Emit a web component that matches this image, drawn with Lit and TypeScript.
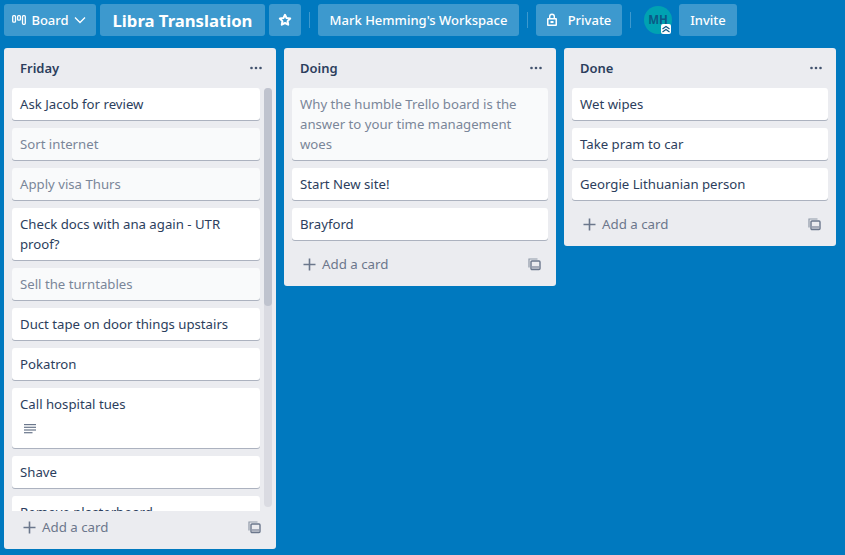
import { css, html, LitElement, svg } from 'lit';
import { customElement, property } from 'lit/decorators.js';

type Card = { text: string; faded?: boolean; desc?: boolean };

const plusIcon = svg`<path d="M6.5 0.500v12M0.500 6.500h12" fill="none" stroke="currentColor" stroke-width="1.6"/>`;
const templateIcon = svg`
  <path d="M9.500 1H1v8.500" fill="none" stroke="currentColor" stroke-width="1.2" opacity="0.7"/>
  <rect x="3" y="3" width="9" height="8.500" rx="1" fill="none" stroke="currentColor" stroke-width="1.400"/>
  <rect x="4" y="8" width="7" height="2.500" fill="currentColor" opacity="0.55"/>
`;

@customElement('board-list')
class BoardList extends LitElement {
  static styles = css`
    :host {
      display: block;
      width: 272px;
      flex: none;
    }

    .list {
      display: flex;
      flex-direction: column;
      background: #ebecf0;
      border-radius: 3px;
    }

    .list--tall {
      height: 501px;
    }

    .list__header {
      display: flex;
      justify-content: space-between;
      align-items: center;
      height: 40px;
      padding: 0 14px 0 16px;
      flex: none;
    }

    .list__name {
      font-size: 13px;
      line-height: 40px;
      font-weight: 600;
      color: #2c3e5d;
      margin-top: -1px;
    }

    .list__body {
      display: flex;
      flex: 1;
      min-height: 0;
      gap: 4px;
      padding: 0 8px;
    }

    .list--tall .list__body {
      padding-right: 4px;
    }

    .list__cards {
      flex: 1;
      min-width: 0;
      overflow: hidden;
    }

    .card {
      background: #fff;
      border-radius: 3px;
      box-shadow: 0 1px 0 rgba(9, 30, 66, 0.28);
      margin-bottom: 8px;
      padding: 6px 8px;
      font-size: 13.2px;
      line-height: 20px;
      color: #2c3e5d;
    }

    .card--faded {
      background: #f9fafb;
      color: #7a8699;
    }

    .card__badge {
      display: block;
      margin: 9px 0 7px 4px;
      color: #6b778c;
    }

    .scrollbar {
      flex: none;
      width: 8px;
      margin-bottom: 4px;
      border-radius: 4px;
      background: #dadbe2;
    }

    .scrollbar__thumb {
      height: 218px;
      border-radius: 4px;
      background: #bfc3ce;
    }

    .list__footer {
      display: flex;
      justify-content: space-between;
      align-items: center;
      height: 32px;
      flex: none;
      padding: 0 15px 6px 19px;
      font-size: 13.3px;
      color: #6b778c;
    }

    .add {
      display: flex;
      align-items: center;
      gap: 6px;
    }

    svg {
      display: block;
    }
  `;

  @property() name = '';
  @property({ type: Array }) cards: Card[] = [];
  @property({ type: Boolean }) tall = false;

  protected render() {
    return html`
      <div class="list ${this.tall ? 'list--tall' : ''}">
        <div class="list__header">
          <span class="list__name">${this.name}</span>
          <svg width="12" height="4" viewBox="0 0 12 4" fill="#42526e">
            <circle cx="1.500" cy="2" r="1.300" /><circle cx="6" cy="2" r="1.300" /><circle cx="10.500" cy="2" r="1.300" />
          </svg>
        </div>
        <div class="list__body">
          <div class="list__cards">
            ${this.cards.map(
              (c) => html`
                <div class="card ${c.faded ? 'card--faded' : ''}">
                  ${c.text}
                  ${c.desc
                    ? html`<svg class="card__badge" width="12" height="12" viewBox="0 0 12 12" fill="currentColor">
                        <rect y="1" width="12" height="1.200" /><rect y="3.700" width="12" height="1.200" />
                        <rect y="6.400" width="12" height="1.200" /><rect y="9.100" width="8.500" height="1.200" />
                      </svg>`
                    : ''}
                </div>
              `,
            )}
          </div>
          ${this.tall ? html`<div class="scrollbar"><div class="scrollbar__thumb"></div></div>` : ''}
        </div>
        <div class="list__footer">
          <span class="add">
            <svg width="13" height="13" viewBox="0 0 13 13">${plusIcon}</svg>
            Add a card
          </span>
          <svg width="13" height="13" viewBox="0 0 13 13">${templateIcon}</svg>
        </div>
      </div>
    `;
  }
}

const friday: Card[] = [
  { text: 'Ask Jacob for review' },
  { text: 'Sort internet', faded: true },
  { text: 'Apply visa Thurs', faded: true },
  { text: 'Check docs with ana again - UTR proof?' },
  { text: 'Sell the turntables', faded: true },
  { text: 'Duct tape on door things upstairs' },
  { text: 'Pokatron' },
  { text: 'Call hospital tues', desc: true },
  { text: 'Shave' },
  { text: 'Remove plasterboard' },
];

const doing: Card[] = [
  { text: 'Why the humble Trello board is the answer to your time management woes', faded: true },
  { text: 'Start New site!' },
  { text: 'Brayford' },
];

const done: Card[] = [
  { text: 'Wet wipes' },
  { text: 'Take pram to car' },
  { text: 'Georgie Lithuanian person' },
];

@customElement('app-root')
export class AppRoot extends LitElement {
  static styles = css`
    :host {
      display: block;
      height: 555px;
      overflow: hidden;
      background: #0079bf;
      font-family: 'Noto Sans', 'Liberation Sans', sans-serif;
    }

    .bar {
      display: flex;
      align-items: center;
      height: 32px;
      padding: 4px 0 12px 4px;
      color: #fff;
    }

    .btn {
      display: flex;
      align-items: center;
      justify-content: center;
      height: 32px;
      flex: none;
      box-sizing: border-box;
      border-radius: 3px;
      background: rgba(255, 255, 255, 0.24);
      font-size: 13px;
      font-weight: 500;
      margin-right: 4px;
    }

    .btn--board { width: 92px; gap: 5px; padding-right: 2px; }
    .btn--title { width: 165px; font-size: 16.7px; font-weight: 700; }
    .btn--star { width: 32px; }
    .btn--workspace { width: 201px; }
    .btn--private { width: 86px; gap: 10px; padding-right: 1px; }
    .btn--invite { width: 58px; }

    .sep {
      flex: none;
      width: 1px;
      height: 16px;
      margin: 0 8px 0 4px;
      background: rgba(255, 255, 255, 0.24);
    }

    .avatar {
      position: relative;
      flex: none;
      width: 28px;
      height: 28px;
      margin: 0 7px 0 5px;
      border-radius: 50%;
      background: #00a2b2;
      color: #0b5a86;
      font-size: 11.5px;
      font-weight: 700;
      line-height: 27px;
      text-align: center;
    }

    .avatar__badge {
      position: absolute;
      right: 1px;
      bottom: 0;
      width: 10px;
      height: 10px;
      border-radius: 2px;
      background: #fff;
    }

    .lists {
      display: flex;
      align-items: flex-start;
      gap: 8px;
      padding-left: 4px;
    }

    svg {
      display: block;
    }
  `;

  protected render() {
    return html`
      <div class="bar">
        <div class="btn btn--board">
          <svg width="14" height="10" viewBox="0 0 14 10" fill="none" stroke="#fff" stroke-width="1.300">
            <rect x="0.700" y="0.700" width="2.800" height="6.500" rx="1" /><rect x="5.600" y="0.700" width="2.800" height="4.500" rx="1" /><rect x="10.500" y="0.700" width="2.800" height="8.600" rx="1" />
          </svg>
          Board
          <svg width="12" height="8" viewBox="0 0 12 8" fill="none" stroke="#fff" stroke-width="1.300">
            <path d="M1 1.500l5 5 5-5" />
          </svg>
        </div>
        <div class="btn btn--title">Libra Translation</div>
        <div class="btn btn--star">
          <svg width="14" height="14" viewBox="0 0 14 14" fill="none" stroke="#fff" stroke-width="2">
            <path d="M7 1.800l1.600 3.300 3.600.5-2.600 2.500.6 3.600L7 10l-3.200 1.700.6-3.600-2.600-2.500 3.600-.5z" stroke-linejoin="round" />
          </svg>
        </div>
        <div class="sep"></div>
        <div class="btn btn--workspace">Mark Hemming's Workspace</div>
        <div class="sep"></div>
        <div class="btn btn--private">
          <svg width="12" height="14" viewBox="0 0 12 14" fill="#fff">
            <path fill-rule="evenodd" d="M3 5V3.500a3 3 0 0 1 6 0V5h1a1 1 0 0 1 1 1v6a1 1 0 0 1-1 1H2a1 1 0 0 1-1-1V6a1 1 0 0 1 1-1zm1.400 0h3.200V3.500a1.600 1.600 0 0 0-3.200 0zM2.500 6.500v5h7v-5zM4.500 8h3v2h-3z" />
          </svg>
          Private
        </div>
        <div class="sep"></div>
        <div class="avatar">
          MH
          <span class="avatar__badge">
            <svg width="10" height="10" viewBox="0 0 10 10" fill="none" stroke="#0b5a86" stroke-width="1.200">
              <path d="M1.500 5l3.500-2.500L8.500 5M1.500 8l3.500-2.500L8.500 8" />
            </svg>
          </span>
        </div>
        <div class="btn btn--invite">Invite</div>
      </div>
      <div class="lists">
        <board-list name="Friday" tall .cards=${friday}></board-list>
        <board-list name="Doing" .cards=${doing}></board-list>
        <board-list name="Done" .cards=${done}></board-list>
      </div>
    `;
  }
}
